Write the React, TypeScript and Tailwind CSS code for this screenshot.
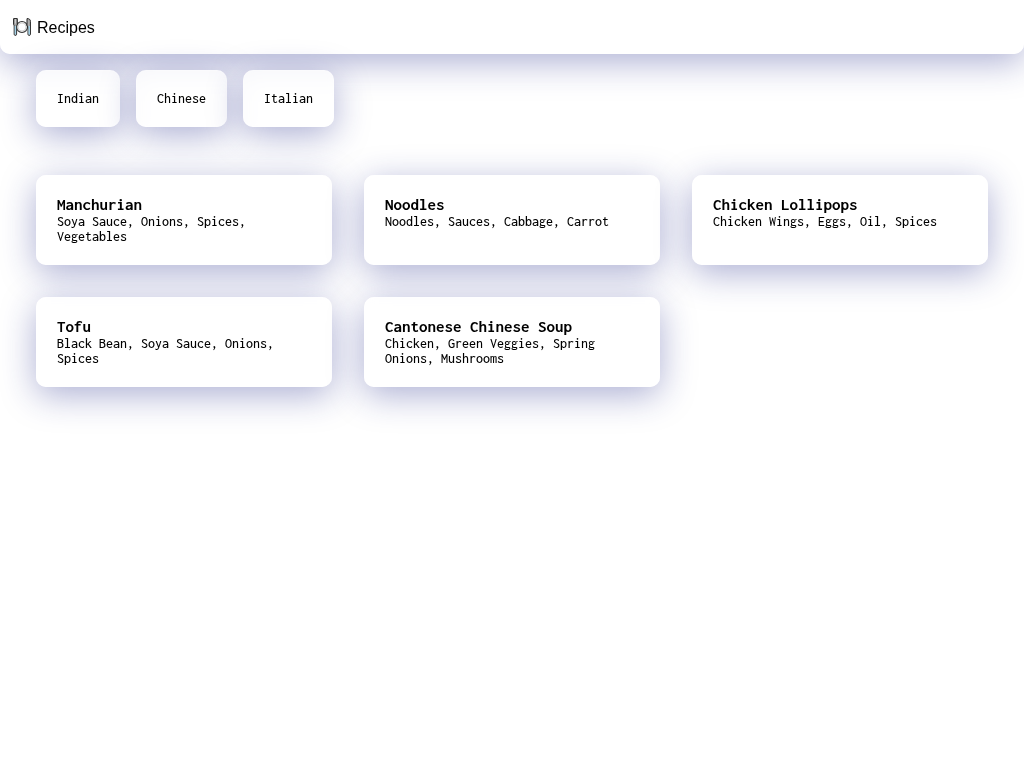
const categories = ["Indian", "Chinese", "Italian"];

const recipes = [
  { name: "Manchurian", ingredients: ["Soya Sauce", "Onions", "Spices", "Vegetables"] },
  { name: "Noodles", ingredients: ["Noodles", "Sauces", "Cabbage", "Carrot"] },
  { name: "Chicken Lollipops", ingredients: ["Chicken Wings", "Eggs", "Oil", "Spices"] },
  { name: "Tofu", ingredients: ["Black Bean", "Soya Sauce", "Onions", "Spices"] },
  {
    name: "Cantonese Chinese Soup",
    ingredients: ["Chicken", "Green Veggies", "Spring Onions", "Mushrooms"],
  },
];

const glass =
  "bg-white/75 border border-white/20 shadow-[0_8px_35px_0_rgba(31,38,135,0.37)] backdrop-blur-xs";

const Logo = () => {
  return (
    <svg className="mt-0.5 size-4.5" viewBox="0 0 18 18" fill="none" aria-hidden="true">
      {/* plate */}
      <circle cx="9" cy="9" r="5.5" fill="#ececec" stroke="#333" strokeWidth="1.1" />
      <circle cx="9" cy="9" r="4" fill="#fff" stroke="#ccc" strokeWidth="0.8" />
      {/* fork */}
      <path
        d="M.6.6v5.6c0 .8.3 1.200.6 1.500v8.600c0 .7.5 1.100 1.200 1.100s1.200-.4 1.200-1.100V7.700c.4-.3.700-.7.700-1.500V.6z"
        fill="#a3a3a3"
        stroke="#222"
        strokeWidth="1"
      />
      <path d="M2.400 1v4.500" stroke="#ddd" strokeWidth="0.8" />
      <path d="M2.400 8v8.500" stroke="#a5d3e8" strokeWidth="1.5" />
      {/* knife */}
      <path
        d="M14 .6c2.200 0 3.400.8 3.400 2.800v12.900c0 .7-.5 1.100-1.200 1.100s-1.200-.4-1.200-1.100V8.500L14 8z"
        fill="#b0b0b0"
        stroke="#222"
        strokeWidth="1"
      />
      <path d="M16.200 8v8.500" stroke="#a5d3e8" strokeWidth="1.5" />
    </svg>
  );
};

const App = () => {
  return (
    <div className="min-h-screen bg-white font-['Inconsolata','Liberation_Mono',monospace] text-sm/[15px] font-medium text-black">
      <header className={`${glass} rounded-b-[10px] px-3 pt-[15px] pb-[13px]`}>
        <a
          href="/"
          className="flex items-start gap-1.5 font-['Liberation_Sans',Arial,sans-serif] text-base font-normal"
        >
          <Logo />
          <span>Recipes</span>
        </a>
      </header>

      <main className="px-9 pt-4 pb-9">
        <nav className="flex flex-wrap gap-4">
          {categories.map((category) => (
            <button key={category} type="button" className={`${glass} rounded-[10px] p-5`}>
              {category}
            </button>
          ))}
        </nav>

        <ul className="mt-12 grid grid-cols-3 gap-8">
          {recipes.map((recipe) => (
            <li key={recipe.name} className={`${glass} rounded-[10px] p-5`}>
              <h2 className="mb-0.5 text-[17px]/[16px] font-bold">{recipe.name}</h2>
              <p>{recipe.ingredients.join(", ")}</p>
            </li>
          ))}
        </ul>
      </main>
    </div>
  );
};

export default App;
